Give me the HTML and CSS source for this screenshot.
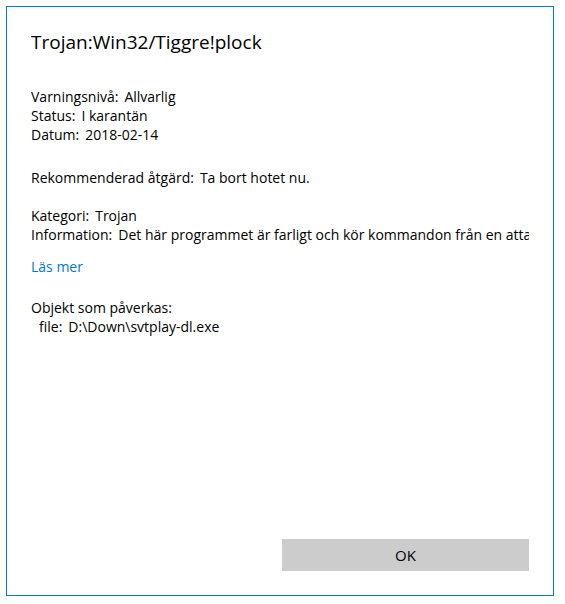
FILE: index.html
```html
<!DOCTYPE html>
<html lang="sv">
<head>
<meta charset="utf-8">
<link rel="stylesheet" href="styles.css">
</head>
<body>
<div class="dialog">
  <div class="content">
    <h1 class="title">Trojan:Win32/Tiggre!plock</h1>
    <div class="group first">
      <div class="row"><span class="label">Varningsnivå:</span><span class="value">Allvarlig</span></div>
      <div class="row"><span class="label">Status:</span><span class="value">I karantän</span></div>
      <div class="row"><span class="label">Datum:</span><span class="value">2018-02-14</span></div>
    </div>
    <div class="group rec">
      <div class="row"><span class="label">Rekommenderad åtgärd:</span><span class="value">Ta bort hotet nu.</span></div>
    </div>
    <div class="group cat">
      <div class="row"><span class="label">Kategori:</span><span class="value">Trojan</span></div>
      <div class="row"><span class="label">Information:</span><span class="value">Det här programmet är farligt och kör kommandon från en attackerare.</span></div>
    </div>
    <a class="more" href="#">Läs mer</a>
    <div class="group affected">
      <div class="row">Objekt som påverkas:</div>
      <div class="row file"><span class="label">file:</span><span class="value">D:\Down\svtplay-dl.exe</span></div>
    </div>
  </div>
  <div class="footer">
    <button class="ok">OK</button>
  </div>
</div>
</body>
</html>
```

FILE: styles.css
```css
html, body {
  margin: 0;
  padding: 0;
  background: #ffffff;
}
body {
  padding: 6px 11px 8px 6px;
  font-family: "Open Sans", "Noto Sans", sans-serif;
  color: #000000;
}
.dialog {
  box-sizing: border-box;
  width: 548px;
  height: 590px;
  border: 1px solid #0078d7;
  display: flex;
  flex-direction: column;
  padding: 0 24px;
}
.content {
  flex: 1;
  overflow: hidden;
}
.title {
  margin: 0;
  padding-top: 21px;
  font-size: 19px;
  font-weight: 400;
  line-height: 28px;
  white-space: nowrap;
}
.group {
  font-size: 14px;
  line-height: 19px;
}
.first { margin-top: 31px; }
.rec { margin-top: 24px; }
.cat { margin-top: 19px; }
.row {
  white-space: nowrap;
  overflow: hidden;
}
.value { margin-left: 6px; }
.more {
  display: inline-block;
  margin-top: 13px;
  font-size: 14px;
  line-height: 19px;
  color: #0078d7;
  text-decoration: none;
}
.affected { margin-top: 21px; }
.file { padding-left: 8px; }
.footer {
  display: flex;
  justify-content: flex-end;
  padding-bottom: 24px;
}
.ok {
  width: 247px;
  height: 32px;
  border: none;
  background: #cccccc;
  font-family: "Open Sans", "Noto Sans", sans-serif;
  font-size: 15px;
  color: #000000;
  padding: 0;
}
```
